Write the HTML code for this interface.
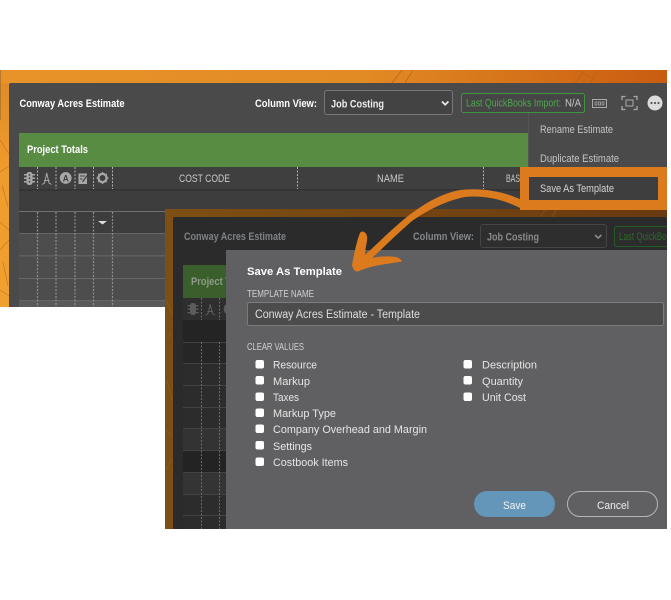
<!DOCTYPE html>
<html lang="en"><head><meta charset="utf-8"><title>Save As Template</title>
<style>
html,body{margin:0;padding:0;background:#fff;width:671px;height:600px;overflow:hidden}
svg{display:block;filter:blur(.35px)}
text{font-family:"Liberation Sans",sans-serif;font-size:11px}
.b{font-weight:700}
</style></head><body>
<svg xmlns="http://www.w3.org/2000/svg" width="671" height="600" viewBox="0 0 671 600">
<defs>
<linearGradient id="o" x1="0" x2="1" y1="0" y2="0"><stop offset="0" stop-color="#e8932a"/><stop offset=".55" stop-color="#e28a24"/><stop offset="1" stop-color="#c95c10"/></linearGradient>
<linearGradient id="s" x1="0" x2="0" y1="0" y2="1"><stop offset="0" stop-color="#e08c28"/><stop offset=".4" stop-color="#ee9c2d"/><stop offset="1" stop-color="#f0a030"/></linearGradient>
<linearGradient id="br" x1="0" x2="1" y1="0" y2="0"><stop offset="0" stop-color="#7d4f14"/><stop offset="1" stop-color="#6a3a10"/></linearGradient>
<clipPath id="top"><rect x="0" y="70" width="667" height="237"/></clipPath>
<clipPath id="low"><rect x="165" y="209" width="502" height="320"/></clipPath>
</defs>

<!-- top panel -->
<g clip-path="url(#top)">
<rect x="0" y="70" width="667" height="237" fill="url(#o)"/>
<rect x="0" y="83" width="9" height="224" fill="url(#s)"/>
<g fill="none" stroke="#c97a1e" stroke-width=".7">
<path d="M0 140l9 14M0 172l9-6M2 185l6 22M0 222l9 8M0 250l9-10M3 262l5 24M0 290l9 6"/>
<path d="M392 83l10-13M405 83l8-13M575 83l10-13M590 83l8-13M577 70l18 10" stroke="#b8601a"/>
</g>
<rect x="0" y="70" width="1" height="50" fill="#b87a2a"/>
<rect x="9" y="83" width="660" height="230" rx="2" fill="#4a4a4b"/>

<text class="b" x="19.500" y="107" textLength="105" lengthAdjust="spacingAndGlyphs" fill="#fff">Conway Acres Estimate</text>
<text class="b" x="255" y="107" textLength="62" lengthAdjust="spacingAndGlyphs" fill="#fff">Column View:</text>
<rect x="324.500" y="90.500" width="128" height="24" rx="2.500" fill="#434344" stroke="#777"/>
<text class="b" x="331" y="107.500" textLength="53" lengthAdjust="spacingAndGlyphs" fill="#eee">Job Costing</text>
<path d="M442 101.500l3.200 3.200 3.200-3.200" fill="none" stroke="#eee" stroke-width="1.700"/>
<rect x="461.500" y="93.500" width="123" height="19" rx="2" fill="#454545" stroke="#3f963f"/>
<text x="466" y="106.500" textLength="95" lengthAdjust="spacingAndGlyphs" fill="#4fa54f">Last QuickBooks Import:</text>
<text x="565" y="106.500" textLength="16" lengthAdjust="spacingAndGlyphs" fill="#c8c8c8">N/A</text>
<rect x="592.500" y="99.500" width="14" height="8" fill="none" stroke="#aaa"/>
<path d="M595 102h2v3h-2zM598.500 102h2v3h-2zM602 102h2v3h-2z" fill="none" stroke="#aaa" stroke-width=".7"/>
<rect x="626" y="100" width="7" height="6" fill="none" stroke="#aaa" stroke-width="1"/>
<path d="M622 100v-3.500h3.500M637 100v-3.500h-3.500M622 106v3.500h3.500M637 106v3.500h-3.500" fill="none" stroke="#aaa" stroke-width="1.300"/>
<circle cx="655" cy="103" r="7.500" fill="#dcdcdc"/>
<circle cx="651.500" cy="103" r="1.100" fill="#555"/><circle cx="655" cy="103" r="1.100" fill="#555"/><circle cx="658.500" cy="103" r="1.100" fill="#555"/>

<rect x="19" y="133" width="510" height="34" fill="#588c42"/>
<text class="b" x="27" y="153" textLength="61" lengthAdjust="spacingAndGlyphs" fill="#fff">Project Totals</text>
<rect x="19" y="167" width="510" height="22" fill="#3f3f40"/>
<rect x="19" y="189" width="510" height="2" fill="#353535"/>
<rect x="19" y="191" width="510" height="20" fill="#3d3d3e"/>
<rect x="19" y="212" width="510" height="21" fill="#3d3d3e"/>
<rect x="19" y="234" width="510" height="67" fill="#4d4d4e"/>
<rect x="19" y="301" width="510" height="6" fill="#5a5a5a"/>
<rect x="19" y="211" width="510" height="1" fill="#707070"/>
<rect x="19" y="233" width="510" height="1" fill="#666"/>
<rect x="19" y="255" width="510" height="1.500" fill="#5f5f5f"/>
<rect x="19" y="278" width="510" height="1" fill="#666"/>
<rect x="19" y="300" width="510" height="1" fill="#666"/>

<g stroke="#b0b0b0" stroke-dasharray="2 1.500" fill="none">
<path d="M37.500 167v22M56 167v22M75 167v22M93.500 167v22M112.500 167v22M297.500 167v22M483.500 167v22"/>
</g>
<g stroke="#8e8e8e" stroke-width="1.200" stroke-dasharray="2 1.500" fill="none">
<path d="M37.500 212v95M56 212v95M75 212v95M93.500 212v95M112.500 212v95"/>
</g>
<!-- header icons -->
<g fill="#a8a8a8">
<rect x="26.500" y="172" width="6" height="13" rx="2.500"/>
<path d="M24 174h2.500v1.500H24zM32.500 174H35v1.500h-2.500zM24 177.500h2.500V179H24zM32.500 177.500H35V179h-2.500zM24 181h2.500v1.500H24zM32.500 181H35v1.500h-2.500z"/>
<circle cx="65.700" cy="178" r="5.900"/>
<path d="M78.500 173.500H87v10.500h-8.500z"/>
</g>
<g fill="#3f3f40"><circle cx="29.500" cy="175" r=".9"/><circle cx="29.500" cy="178.300" r=".9"/><circle cx="29.500" cy="181.700" r=".9"/></g>
<path d="M80 176h5M80 179h2.500" stroke="#3f3f40" stroke-width="1"/>
<path d="M82.500 182l5-7" stroke="#3f3f40" stroke-width="1.200"/>
<circle cx="102.500" cy="178" r="4.100" fill="none" stroke="#a8a8a8" stroke-width="2.200"/>
<path d="M102.500 172v12M96.500 178h12M98.300 173.800l8.400 8.400M106.700 173.800l-8.400 8.400" stroke="#a8a8a8" stroke-width="1.300" stroke-dasharray="1.500 9 1.500"/>
<path d="M42 184.500l2.500-1.500 2.200-10 2.300 10 2.500 1.500M44 180.500h5.500" fill="none" stroke="#a8a8a8" stroke-width="1"/>
<text class="b" x="62.700" y="181.500" textLength="6" lengthAdjust="spacingAndGlyphs" fill="#3f3f40" style="font-size:9px">A</text>
<text x="179" y="182" textLength="51" lengthAdjust="spacingAndGlyphs" fill="#c8c8c8">COST CODE</text>
<text x="377" y="182" textLength="27" lengthAdjust="spacingAndGlyphs" fill="#c8c8c8">NAME</text>
<text x="506" y="182" textLength="14" lengthAdjust="spacingAndGlyphs" fill="#c8c8c8">BAS</text>
<path d="M98 221h9l-4.500 3.500z" fill="#ddd"/>

<!-- menu -->
<rect x="528" y="113" width="139" height="60" fill="#4a4a4b"/>
<rect x="528" y="113" width="1" height="60" fill="#555"/>
<text x="540" y="133" textLength="73" lengthAdjust="spacingAndGlyphs" fill="#c4c4c4">Rename Estimate</text>
<text x="540" y="162" textLength="79" lengthAdjust="spacingAndGlyphs" fill="#c4c4c4">Duplicate Estimate</text>
</g>

<!-- lower panel -->
<rect x="0" y="307" width="165" height="293" fill="#fff"/>
<g clip-path="url(#low)">
<rect x="165" y="209" width="502" height="320" fill="url(#br)"/>
<g fill="none" stroke="#8e5f22" stroke-width=".6"><path d="M166 300l6 14M166 340l6-8M167 380l5 20M166 430l6 6M166 470l6-12"/><path d="M540 217l6-8M552 217l5-8" stroke="#8a5a20"/></g>
<rect x="173" y="217" width="494" height="320" rx="2" fill="#2b2b2c"/>
<text x="184" y="240" textLength="102" lengthAdjust="spacingAndGlyphs" class="b" fill="#7e8284">Conway Acres Estimate</text>
<text x="413" y="240" textLength="61" lengthAdjust="spacingAndGlyphs" class="b" fill="#84888a">Column View:</text>
<rect x="480.500" y="224.500" width="126" height="23" rx="2.500" fill="#2e2e2f" stroke="#454545"/>
<text x="487" y="240.500" textLength="52" lengthAdjust="spacingAndGlyphs" class="b" fill="#8a8a8a">Job Costing</text>
<path d="M595 235l3.200 3 3.200-3" fill="none" stroke="#8a8a8a" stroke-width="1.600"/>
<rect x="614.500" y="226.500" width="60" height="20" rx="2" fill="#2c2c2c" stroke="#245a24"/>
<text x="619" y="240" textLength="60" lengthAdjust="spacingAndGlyphs" fill="#2c6a2c">Last QuickBooks</text>

<rect x="183" y="265" width="60" height="33" fill="#3a5f2c"/>
<text x="191" y="285" textLength="40" lengthAdjust="spacingAndGlyphs" class="b" fill="#8e9c88">Project T</text>
<rect x="183" y="298" width="50" height="22" fill="#2e2e2f"/>
<rect x="183" y="320" width="50" height="22" fill="#242425"/>
<rect x="183" y="342" width="50" height="21" fill="#262627"/>
<rect x="183" y="363" width="50" height="66" fill="#2c2c2d"/>
<rect x="183" y="429" width="50" height="21" fill="#333334"/>
<rect x="183" y="450" width="50" height="22" fill="#232324"/>
<rect x="183" y="472" width="50" height="22" fill="#343435"/>
<rect x="183" y="494" width="50" height="35" fill="#2c2c2d"/>
<path d="M183 342.500h50M183 363.500h50M183 385.500h50M183 407.500h50M183 428.500h50M183 450.500h50M183 472.500h50M183 494.500h50M183 515.500h50" stroke="#424242"/>
<g stroke="#6c6c6c" stroke-dasharray="2 1.500" fill="none"><path d="M201.500 298v22M219.500 298v22M201.500 342v187M219.500 342v187"/></g>
<g fill="#5c5c5c">
<rect x="190" y="303" width="6" height="12" rx="2.500"/>
<path d="M187.500 305h2.500v1.300h-2.500zM196 305h2.500v1.300H196zM187.500 308.500h2.500v1.300h-2.500zM196 308.500h2.500v1.300H196zM187.500 312h2.500v1.300h-2.500zM196 312h2.500v1.300H196z"/>
<circle cx="229.500" cy="309" r="5.800"/>
</g>
<path d="M205.500 315l2.500-1.300 2.200-9.500 2.300 9.500 2.500 1.300M207.500 311.500h5.500" fill="none" stroke="#5c5c5c" stroke-width="1"/>

<!-- modal -->
<rect x="226" y="250" width="441" height="279" fill="#606062"/>
<text class="b" x="247" y="275" textLength="95" lengthAdjust="spacingAndGlyphs" fill="#fff">Save As Template</text>
<text x="247" y="297" textLength="67" lengthAdjust="spacingAndGlyphs" fill="#cfcfcf" style="font-size:10px">TEMPLATE NAME</text>
<rect x="247.500" y="302.500" width="416" height="23" rx="2" fill="#4c4c4d" stroke="#7c7c7c"/>
<text x="255" y="318" textLength="165" lengthAdjust="spacingAndGlyphs" fill="#dedede" style="font-size:11.500px">Conway Acres Estimate - Template</text>
<text x="247" y="350" textLength="57" lengthAdjust="spacingAndGlyphs" fill="#cfcfcf" style="font-size:10px">CLEAR VALUES</text>
<g fill="#fff">
<rect x="255.500" y="360" width="8.500" height="8.500" rx="2"/>
<rect x="255.500" y="376" width="8.500" height="8.500" rx="2"/>
<rect x="255.500" y="392.500" width="8.500" height="8.500" rx="2"/>
<rect x="255.500" y="408.500" width="8.500" height="8.500" rx="2"/>
<rect x="255.500" y="424.500" width="8.500" height="8.500" rx="2"/>
<rect x="255.500" y="441" width="8.500" height="8.500" rx="2"/>
<rect x="255.500" y="457.500" width="8.500" height="8.500" rx="2"/>
<rect x="463.500" y="360" width="8.500" height="8.500" rx="2"/>
<rect x="463.500" y="376" width="8.500" height="8.500" rx="2"/>
<rect x="463.500" y="392.500" width="8.500" height="8.500" rx="2"/>
</g>
<g fill="#e6e6e6" style="font-size:11.500px">
<text x="273" y="368.500" textLength="44" lengthAdjust="spacingAndGlyphs">Resource</text>
<text x="273" y="385" textLength="37" lengthAdjust="spacingAndGlyphs">Markup</text>
<text x="273" y="401" textLength="26" lengthAdjust="spacingAndGlyphs">Taxes</text>
<text x="273" y="417" textLength="63" lengthAdjust="spacingAndGlyphs">Markup Type</text>
<text x="273" y="433" textLength="154" lengthAdjust="spacingAndGlyphs">Company Overhead and Margin</text>
<text x="273" y="450" textLength="39" lengthAdjust="spacingAndGlyphs">Settings</text>
<text x="273" y="466" textLength="75" lengthAdjust="spacingAndGlyphs">Costbook Items</text>
<text x="482" y="368.500" textLength="55" lengthAdjust="spacingAndGlyphs">Description</text>
<text x="482" y="385" textLength="41" lengthAdjust="spacingAndGlyphs">Quantity</text>
<text x="482" y="401" textLength="44" lengthAdjust="spacingAndGlyphs">Unit Cost</text>
</g>
<rect x="474" y="491" width="81" height="26" rx="13" fill="#6396b8"/>
<text x="503" y="509" textLength="23" lengthAdjust="spacingAndGlyphs" fill="#f4f4f4">Save</text>
<rect x="567.500" y="491.500" width="90" height="25" rx="12.500" fill="none" stroke="#b5b5b5"/>
<text x="597" y="509" textLength="32" lengthAdjust="spacingAndGlyphs" fill="#eee">Cancel</text>
</g>

<!-- highlight + arrow -->
<path fill-rule="evenodd" d="M520 167H667V210H520zM529 177V200H658V177z" fill="#dc7a1e"/>
<rect x="529" y="177" width="129" height="23" fill="#3e3e3f"/>
<text x="540" y="192" textLength="74" lengthAdjust="spacingAndGlyphs" fill="#d4d4d4">Save As Template</text>
<path d="M522 200C505 192 485 188 465 189.500C445 191 425 203 408 216C392 229 378 243 365 255C365 248 368 240 367 236C366 232 362 230 360 233C357 240 354 254 352 265C353 269 355 272 358 271.500C372 265 388 264 402 261.500C400 257 395 256.500 390 256.500C383 256 377 257 372 258C385 246 398 233 412 221C428 210 445 201 465 197C485 195 505 200 522 209Z" fill="#dc7a1e"/>
</svg>
</body></html>
